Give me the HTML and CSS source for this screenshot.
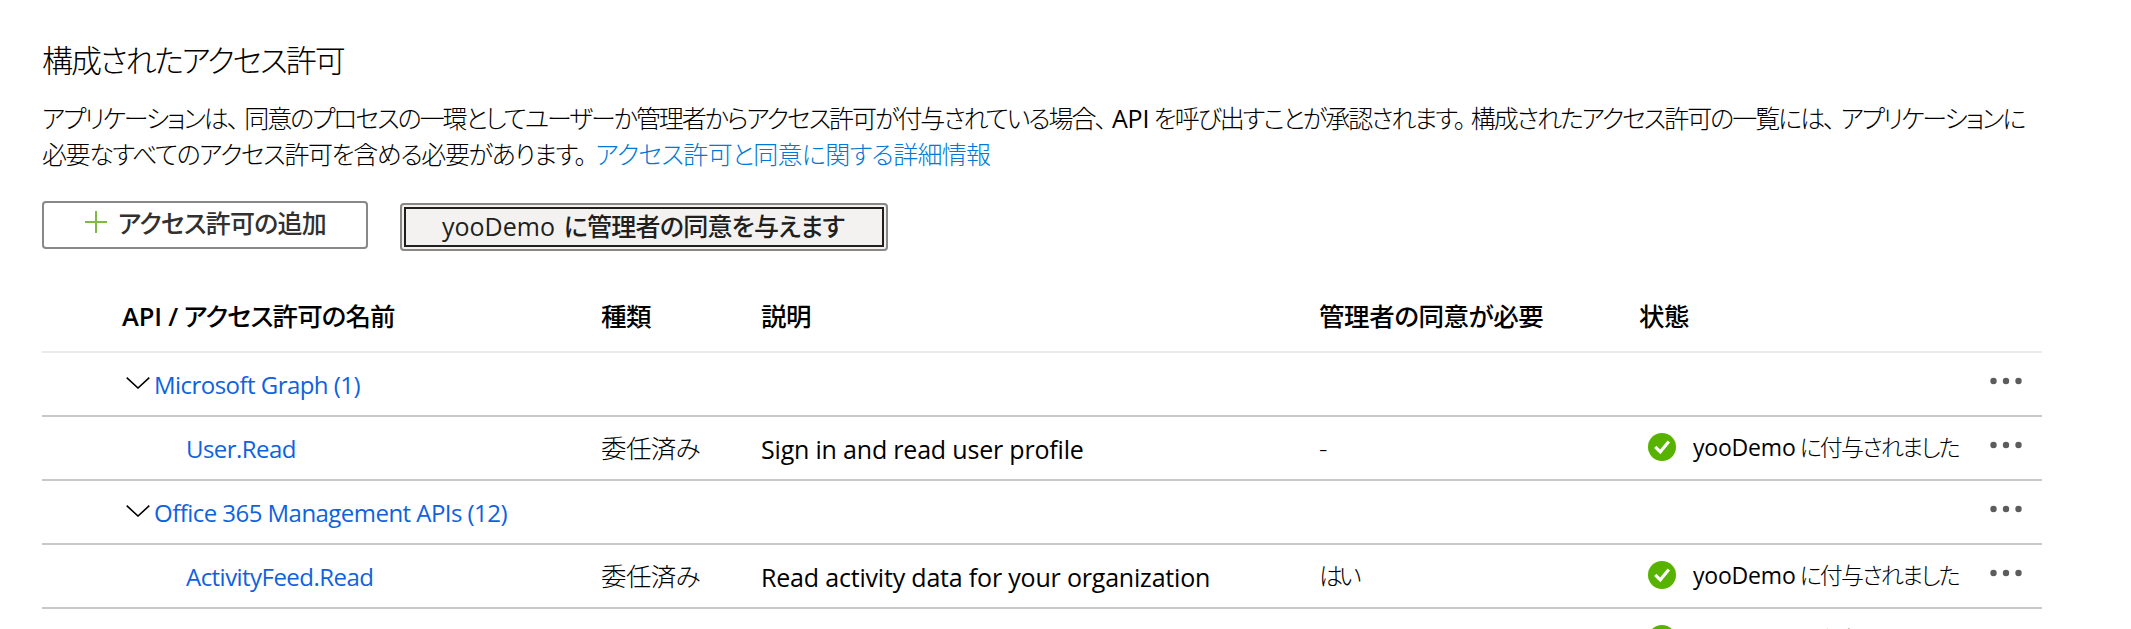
FILE: index.html
```html
<!DOCTYPE html>
<html lang="ja">
<head>
  <meta charset="UTF-8">
  <meta name="viewport" content="width=device-width, initial-scale=1.0">
  <title>API のアクセス許可</title>
  <link rel="stylesheet" href="styles.css">
</head>
<body>
  <svg class="sprite" aria-hidden="true">
    <symbol id="chevron" viewBox="0 0 24 12"><path d="M.7 .7 12 11 23.3 .7" fill="none" stroke="#000" stroke-width="1.6"/></symbol>
    <symbol id="check" viewBox="0 0 28 28"><circle cx="14" cy="14" r="14" fill="#57b300"/><path d="M7.2 13.8 12.3 18.8 20.8 8.6" fill="none" stroke="#fff" stroke-width="3.2"/></symbol>
    <symbol id="dots" viewBox="0 0 32 8"><g fill="#5c5c5c"><circle cx="3.5" cy="4" r="3.2"/><circle cx="16" cy="4" r="3.2"/><circle cx="28.5" cy="4" r="3.2"/></g></symbol>
  </svg>

  <h1>構成されたアクセス許可</h1>
  <p class="intro"><span class="line1">アプリケーションは<span class="mark">、</span>同意のプロセスの一環としてユーザーか管理者からアクセス許可が付与されている場合<span class="mark">、</span><span class="latin">API</span> を呼び出すことが承認されます<span class="mark">。</span>構成されたアクセス許可の一覧には<span class="mark">、</span>アプリケーションに</span><br><span class="line2">必要なすべてのアクセス許可を含める必要があります。</span><a href="#">アクセス許可と同意に関する詳細情報</a></p>

  <div class="toolbar">
    <button type="button" class="add">
      <svg width="22" height="22" viewBox="0 0 22 22"><path d="M11 0v22M0 11h22" stroke="#7fba42" stroke-width="2"/></svg>
      <span>アクセス許可の追加</span>
    </button>
    <button type="button" class="grant"><span><span class="latin">yooDemo</span> に管理者の同意を与えます</span></button>
  </div>

  <table>
    <colgroup>
      <col class="col-name"><col class="col-type"><col class="col-desc"><col class="col-admin"><col class="col-status"><col class="col-menu">
    </colgroup>
    <thead>
      <tr>
        <th class="name"><span class="latin">API /</span> アクセス許可の名前</th>
        <th>種類</th>
        <th>説明</th>
        <th>管理者の同意が必要</th>
        <th>状態</th>
        <th></th>
      </tr>
    </thead>
    <tbody>
      <tr>
        <td class="group" colspan="5"><svg class="chevron"><use href="#chevron"/></svg><a href="#">Microsoft Graph (1)</a></td>
        <td class="menu"><svg><use href="#dots"/></svg></td>
      </tr>
      <tr>
        <td class="permission"><a href="#">User.Read</a></td>
        <td class="type">委任済み</td>
        <td class="desc">Sign in and read user profile</td>
        <td>-</td>
        <td class="status"><div><svg><use href="#check"/></svg><span><span class="latin">yooDemo</span> に付与されました</span></div></td>
        <td class="menu"><svg><use href="#dots"/></svg></td>
      </tr>
      <tr>
        <td class="group" colspan="5"><svg class="chevron"><use href="#chevron"/></svg><a href="#">Office 365 Management APIs (12)</a></td>
        <td class="menu"><svg><use href="#dots"/></svg></td>
      </tr>
      <tr>
        <td class="permission"><a href="#">ActivityFeed.Read</a></td>
        <td class="type">委任済み</td>
        <td class="desc">Read activity data for your organization</td>
        <td class="yes">はい</td>
        <td class="status"><div><svg><use href="#check"/></svg><span><span class="latin">yooDemo</span> に付与されました</span></div></td>
        <td class="menu"><svg><use href="#dots"/></svg></td>
      </tr>
      <tr>
        <td></td>
        <td class="type">アプリケーション</td>
        <td></td>
        <td></td>
        <td class="status"><div><svg><use href="#check"/></svg><span><span class="latin">yooDemo</span> に付与されました</span></div></td>
        <td></td>
      </tr>
    </tbody>
  </table>
</body>
</html>
```
FILE: styles.css
```css
* { box-sizing: border-box; }
body { margin: 0; padding: 38px 42px 0; height: 629px; overflow: hidden; background: #fff; color: #000; font-family: "Open Sans", "Noto Sans CJK JP", sans-serif; font-size: 26px; font-feature-settings: "palt"; font-weight: 300; }
.sprite { display: none; }
.latin { font-weight: 400; letter-spacing: -0.2px; }
h1 { margin: 0; font-size: 31px; line-height: 44px; font-weight: 300; letter-spacing: -2.1px; }
a { color: #0f62de; text-decoration: none; }

.intro { margin: 19px 0 0; font-size: 25px; line-height: 35.5px; white-space: nowrap; }
.line1 { letter-spacing: -2.05px; }
.line2 { letter-spacing: -1.4px; }
.mark { margin-right: 7px; }
.intro a { color: #0078d4; margin-left: 10px; letter-spacing: -0.7px; }

.toolbar { display: flex; align-items: flex-start; gap: 32px; margin-top: 29px; }
button { display: flex; align-items: center; height: 48px; padding: 0; border: 2px solid #8a8886; border-radius: 4px; background: #fff; color: #323130; font: inherit; font-size: 25px; font-weight: 500; white-space: nowrap; letter-spacing: -0.75px; }
button .latin { margin-right: 3px; font-weight: 500; letter-spacing: 0; }
th .latin { font-weight: 600; }
.add { width: 326px; padding: 0 0 6px 41px; gap: 11px; }
.grant { width: 488px; margin-top: 2px; padding: 0 0 5px 40px; background: #f3f2f1; color: #201f1e; outline: 2px solid #201f1e; outline-offset: -6px; }

table { width: 2000px; margin-top: 32px; border-collapse: separate; border-spacing: 0; table-layout: fixed; }
.col-name { width: 559px; }
.col-type { width: 160px; }
.col-desc { width: 558px; }
.col-admin { width: 320px; }
.col-status { width: 340px; }
.col-menu { width: 63px; }
th, td { height: 64px; padding: 0; border-bottom: 2px solid #c8c8c8; text-align: left; line-height: 36px; white-space: nowrap; }
th { height: 70px; padding-bottom: 2px; border-bottom-color: #eaeaea; font-size: 25.5px; font-weight: 500; letter-spacing: -0.4px; }
th.name { padding-left: 80px; letter-spacing: -0.9px; }
.group, .permission, .desc { padding-top: 2px; font-size: 24px; font-weight: 400; letter-spacing: -0.54px; }
.desc { font-size: 25px; letter-spacing: -0.19px; }
.group { padding-left: 84px; }
.permission { padding-left: 144px; }
.type { font-size: 25.5px; letter-spacing: -0.6px; }
.yes { font-size: 24px; letter-spacing: -4px; }
.chevron { width: 24px; height: 12px; margin-right: 4px; vertical-align: 5px; }
.status div { display: flex; align-items: center; gap: 17px; padding: 0 0 3px 9px; font-size: 23px; letter-spacing: -1.9px; }
.status svg { flex: none; width: 28px; height: 28px; }
.menu svg { display: block; width: 32px; height: 8px; margin: 0 0 6px 11px; }
```
